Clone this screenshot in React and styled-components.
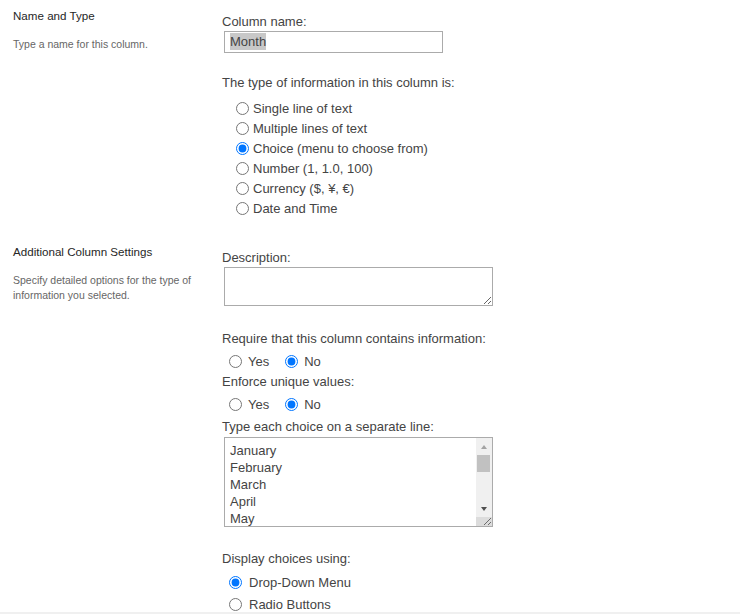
import React from "react";
import styled, { createGlobalStyle } from "styled-components";

const GlobalStyle = createGlobalStyle`
  html, body {
    margin: 0;
    padding: 0;
    background: #fff;
    font-family: "Liberation Sans", Arial, sans-serif;
  }
`;

const Page = styled.div`
  height: 100vh;
  display: flex;
  flex-direction: column;
`;

const Content = styled.div`
  flex: 1;
  overflow: hidden;
  padding-top: 8px;
`;

const BottomEdge = styled.div`
  height: 2px;
  background: #f0f0f0;
`;

const Section = styled.div`
  display: grid;
  grid-template-columns: 196px 1fr;
  column-gap: 13px;
  padding-left: 13px;
  margin-bottom: 26px;
`;

const Info = styled.div`
  color: #333;
`;

const SectionTitle = styled.div`
  font-size: 11.6px;
  line-height: 16px;
  color: #262626;
`;

const SectionDesc = styled.div`
  margin-top: 13px;
  font-size: 10.5px;
  line-height: 14.5px;
  color: #666;
`;

const Fields = styled.div`
  padding-top: 6px;
  font-size: 13px;
  color: #444;
`;

const Label = styled.div`
  line-height: 16px;
  margin-top: ${(p) => p.$top || 0}px;
`;

const TextBox = styled.div`
  box-sizing: border-box;
  margin: 1px 0 0 2px;
  width: 219px;
  height: 22px;
  border: 1px solid #ababab;
  padding-left: 5px;
  line-height: 20px;
`;

const Selected = styled.span`
  background: #c8c8c8;
  padding: 1px 0;
`;

const Area = styled.textarea`
  display: block;
  box-sizing: border-box;
  margin: 1px 0 0 2px;
  width: 269px;
  height: 39px;
  border: 1px solid #ababab;
  border-radius: 0;
  padding: 4px 5px;
  font-family: "Liberation Sans", Arial, sans-serif;
  font-size: 13px;
  color: #444;
  outline: none;
`;

/* the choices box: text area plus a classic scrollbar drawn beside it */
const ChoiceBox = styled.div`
  display: flex;
  box-sizing: border-box;
  margin: 2px 0 0 2px;
  width: 269px;
  height: 90px;
  border: 1px solid #ababab;
`;

const ChoiceText = styled.textarea`
  flex: 1;
  min-width: 0;
  border: 0;
  margin: 0;
  padding: 4px 5px;
  resize: none;
  overflow: hidden;
  outline: none;
  font-family: "Liberation Sans", Arial, sans-serif;
  font-size: 13px;
  line-height: 17px;
  color: #444;
`;

const ScrollBar = styled.div`
  width: 16px;
  display: flex;
  flex-direction: column;
  background: #f0f0f0;
`;

const ArrowButton = styled.div`
  height: 17px;
  display: flex;
  align-items: center;
  justify-content: center;

  &::before {
    content: "";
    border-left: 3.5px solid transparent;
    border-right: 3.5px solid transparent;
    ${(p) =>
      p.$dir === "up"
        ? "border-bottom: 4px solid #a3a3a3;"
        : "border-top: 4px solid #505050;"}
  }
`;

const Thumb = styled.div`
  height: 17px;
  margin: 0 2px 0 1px;
  background: #c1c1c1;
`;

const Track = styled.div`
  flex: 1;
`;

const Corner = styled.div`
  height: 9px;
  background: #dcdcdc;
  display: flex;
  justify-content: flex-end;
  align-items: flex-end;
`;

const TypeList = styled.div`
  margin-top: 7px;
  padding-left: 14px;
`;

const TypeOption = styled.label`
  display: flex;
  align-items: center;
  height: 20px;
  gap: 4px;
`;

const Radio = styled.input.attrs({ type: "radio" })`
  width: 13px;
  height: 13px;
  margin: 1px 0 0 0;
  flex: none;
  accent-color: #0075ff;
`;

const InlineChoices = styled.div`
  display: flex;
  align-items: center;
  height: 22px;
  margin-top: 3px;
  padding-left: 7px;
  gap: 16px;
`;

const InlineOption = styled.label`
  display: flex;
  align-items: center;
  gap: 6px;
`;

const StackChoices = styled.div`
  margin-top: 4px;
  padding-left: 7px;
`;

const StackOption = styled.label`
  display: flex;
  align-items: center;
  height: 22px;
  gap: 7px;
`;

const types = [
  "Single line of text",
  "Multiple lines of text",
  "Choice (menu to choose from)",
  "Number (1, 1.0, 100)",
  "Currency ($, ¥, €)",
  "Date and Time",
];

const months = [
  "January",
  "February",
  "March",
  "April",
  "May",
  "June",
  "July",
  "August",
  "September",
  "October",
  "November",
  "December",
].join("\n");

function Grip() {
  return (
    <svg width="9" height="9" viewBox="0 0 9 9">
      <path d="M1 8 L8 1 M5 8 L8 5" stroke="#6d6d6d" strokeWidth="1" fill="none" />
    </svg>
  );
}

function YesNo({ name }) {
  return (
    <InlineChoices>
      <InlineOption>
        <Radio name={name} />
        Yes
      </InlineOption>
      <InlineOption>
        <Radio name={name} defaultChecked />
        No
      </InlineOption>
    </InlineChoices>
  );
}

export default function App() {
  return (
    <Page>
      <GlobalStyle />
      <Content>
        <Section>
          <Info>
            <SectionTitle>Name and Type</SectionTitle>
            <SectionDesc>Type a name for this column.</SectionDesc>
          </Info>
          <Fields>
            <Label>Column name:</Label>
            <TextBox>
              <Selected>Month</Selected>
            </TextBox>
            <Label $top={22}>The type of information in this column is:</Label>
            <TypeList>
              {types.map((t, i) => (
                <TypeOption key={t}>
                  <Radio name="type" defaultChecked={i === 2} />
                  {t}
                </TypeOption>
              ))}
            </TypeList>
          </Fields>
        </Section>

        <Section>
          <Info>
            <SectionTitle>Additional Column Settings</SectionTitle>
            <SectionDesc>
              Specify detailed options for the type of information you selected.
            </SectionDesc>
          </Info>
          <Fields>
            <Label>Description:</Label>
            <Area defaultValue="" />
            <Label $top={25}>Require that this column contains information:</Label>
            <YesNo name="required" />
            <Label $top={2}>Enforce unique values:</Label>
            <YesNo name="unique" />
            <Label $top={4}>Type each choice on a separate line:</Label>
            <ChoiceBox>
              <ChoiceText defaultValue={months} />
              <ScrollBar>
                <ArrowButton $dir="up" />
                <Thumb />
                <Track />
                <ArrowButton $dir="down" />
                <Corner>
                  <Grip />
                </Corner>
              </ScrollBar>
            </ChoiceBox>
            <Label $top={24}>Display choices using:</Label>
            <StackChoices>
              <StackOption>
                <Radio name="display" defaultChecked />
                Drop-Down Menu
              </StackOption>
              <StackOption>
                <Radio name="display" />
                Radio Buttons
              </StackOption>
            </StackChoices>
          </Fields>
        </Section>
      </Content>
      <BottomEdge />
    </Page>
  );
}
